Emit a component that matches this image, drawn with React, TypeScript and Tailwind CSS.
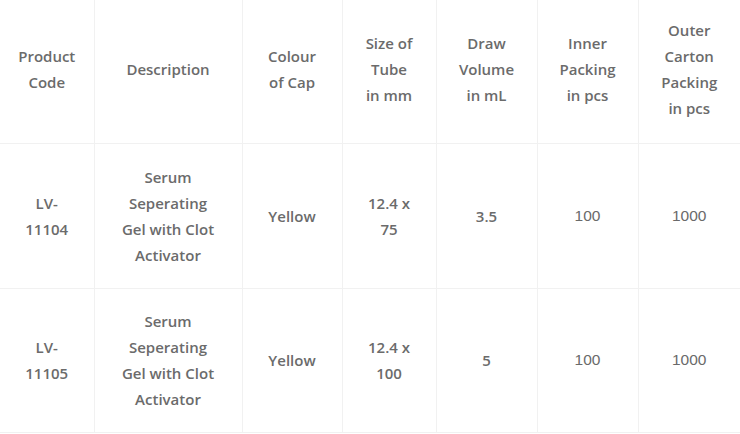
import React from 'react'

type Row = {
  code: string[]
  desc: string[]
  cap: string
  size: string[]
  volume: string
  inner: string
  outer: string
  height: string
}

const rows: Row[] = [
  {
    code: ['LV-', '11104'],
    desc: ['Serum', 'Seperating', 'Gel with Clot', 'Activator'],
    cap: 'Yellow',
    size: ['12.4 x', '75'],
    volume: '3.5',
    inner: '100',
    outer: '1000',
    height: 'h-[145px]',
  },
  {
    code: ['LV-', '11105'],
    desc: ['Serum', 'Seperating', 'Gel with Clot', 'Activator'],
    cap: 'Yellow',
    size: ['12.4 x', '100'],
    volume: '5',
    inner: '100',
    outer: '1000',
    height: 'h-[144px]',
  },
]

const headers: string[][] = [
  ['Product', 'Code'],
  ['Description'],
  ['Colour', 'of Cap'],
  ['Size of', 'Tube', 'in mm'],
  ['Draw', 'Volume', 'in mL'],
  ['Inner', 'Packing', 'in pcs'],
  ['Outer', 'Carton', 'Packing', 'in pcs'],
]

const widths = ['w-[94px]', 'w-[148px]', 'w-[100px]', 'w-[94px]', 'w-[101px]', 'w-[101px]', 'w-[102px]']

const Lines = ({ lines }: { lines: string[] }) => (
  <>
    {lines.map((l, i) => (
      <span key={i} className="block">
        {l}
      </span>
    ))}
  </>
)

const cell = 'border border-[#f1f1f1] text-center align-middle px-2 first:border-l-0 last:border-r-0'
const num = `${cell} font-['Liberation_Sans',Arial,sans-serif] font-normal text-[15.5px] text-[#6a6a6a]`

export default function App() {
  return (
    <div className="w-[740px] h-[434px] bg-white overflow-hidden">
      <table
        className="w-[740px] table-fixed border-collapse text-[#6b6b6b] text-[15px] leading-[26px] font-semibold"
        style={{ fontFamily: '"Open Sans", "Noto Sans", sans-serif' }}
      >
        <colgroup>
          {widths.map((w, i) => (
            <col key={i} className={w} />
          ))}
        </colgroup>
        <thead>
          <tr className="h-[143px]">
            {headers.map((h, i) => (
              <th key={i} className={`${cell} border-t-0 pb-[5px] font-semibold`}>
                <Lines lines={h} />
              </th>
            ))}
          </tr>
        </thead>
        <tbody>
          {rows.map((r, i) => (
            <tr key={i} className={r.height}>
              <td className={cell}>
                <Lines lines={r.code} />
              </td>
              <td className={cell}>
                <Lines lines={r.desc} />
              </td>
              <td className={cell}>{r.cap}</td>
              <td className={cell}>
                <Lines lines={r.size} />
              </td>
              <td className={cell}>{r.volume}</td>
              <td className={num}>{r.inner}</td>
              <td className={num}>{r.outer}</td>
            </tr>
          ))}
        </tbody>
      </table>
    </div>
  )
}
